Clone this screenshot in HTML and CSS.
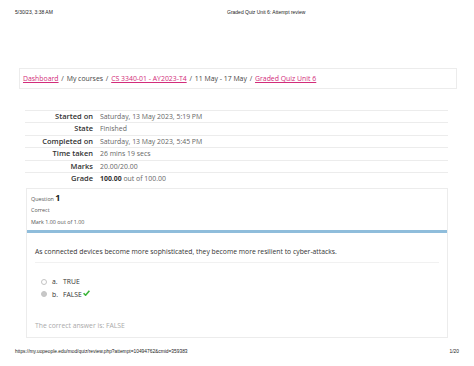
FILE: index.html
```html
<!DOCTYPE html>
<html lang="en">
  <head>
    <title>Graded Quiz Unit 6: Attempt review</title>
    <link rel="stylesheet" href="styles.css">
  </head>
  <body>
    <div class="print-head">
      <span class="date">5/30/23, 3:38 AM</span>
      <span class="doc-title">Graded Quiz Unit 6: Attempt review</span>
    </div>

    <nav class="crumbs">
      <a href="#">Dashboard</a> <span class="sep">/</span> My courses <span class="sep">/</span>
      <a href="#">CS 3340-01 - AY2023-T4</a> <span class="sep">/</span> 11 May - 17 May <span class="sep">/</span>
      <a href="#">Graded Quiz Unit 6</a>
    </nav>

    <table class="summary">
      <tr><th>Started on</th><td>Saturday, 13 May 2023, 5:19 PM</td></tr>
      <tr><th>State</th><td>Finished</td></tr>
      <tr><th>Completed on</th><td>Saturday, 13 May 2023, 5:45 PM</td></tr>
      <tr><th>Time taken</th><td>26 mins 19 secs</td></tr>
      <tr><th>Marks</th><td>20.00/20.00</td></tr>
      <tr><th>Grade</th><td><b>100.00</b> out of 100.00</td></tr>
    </table>

    <div class="que">
      <div class="que-info">
        <div class="qno">Question <b>1</b></div>
        <div class="state">Correct</div>
        <div class="grade">Mark 1.00 out of 1.00</div>
      </div>
      <div class="formulation">
        <p class="qtext">As connected devices become more sophisticated, they become more resilient to cyber-attacks.</p>
        <div class="answers">
          <div class="opt">
            <span class="radio"></span><span class="letter">a.</span><span>TRUE</span>
          </div>
          <div class="opt">
            <span class="radio on"></span><span class="letter">b.</span><span>FALSE</span>
            <svg class="tick" width="7" height="6" viewBox="0 0 7 6">
              <path d="M0.6 3.2 L2.6 5.2 L6.4 0.8" fill="none" stroke="#3bb53b" stroke-width="1.6"/>
            </svg>
          </div>
        </div>
      </div>
      <div class="feedback">The correct answer is: FALSE</div>
    </div>

    <div class="print-foot">
      <span>https://my.uopeople.edu/mod/quiz/review.php?attempt=10494762&amp;cmid=359383</span>
      <span>1/20</span>
    </div>
  </body>
</html>
```

FILE: styles.css
```css
body {
  margin: 0;
  width: 474px;
  height: 366px;
  background: #fff;
  font-family: "Open Sans", "Noto Sans", sans-serif;
  color: #333;
  overflow: hidden;
}

/* 인쇄 머리말 / 꼬리말 */
.print-head,
.print-foot {
  font-family: "Liberation Sans", Arial, sans-serif;
  font-size: 5px;
  color: #222;
}
.print-head {
  display: grid;
  grid-template-columns: 212px 1fr;
  padding: 9px 15px 0;
  height: 68px;
  box-sizing: border-box;
}
.print-foot {
  display: flex;
  justify-content: space-between;
  padding: 11px 15px 0 15px;
  font-size: 4.85px;
}

/* breadcrumb */
.crumbs {
  margin: 0 17px 0 19px;
  height: 21px;
  padding: 0 3px;
  border: 1px solid #ececec;
  box-sizing: border-box;
  font-size: 6.9px;
  line-height: 19px;
  color: #444;
  white-space: nowrap;
}
.crumbs a {
  color: #d22c7a;
}
.sep {
  margin: 0 1px;
}

/* 요약 표 */
.summary {
  margin: 21px 26px 0 25px;
  width: 423px;
  border-collapse: collapse;
  font-size: 6.9px;
}
.summary tr {
  border-top: 1px solid #ececec;
}
.summary th,
.summary td {
  padding: 0;
  height: 11.4px;
  line-height: 11.4px;
}
.summary th {
  width: 68px;
  text-align: right;
  padding-right: 7px;
  font-size: 7.5px;
  font-weight: 600;
  color: #333;
}
.summary td {
  color: #666;
}
.summary td b {
  color: #333;
  font-weight: 700;
}

/* 문제 카드 */
.que {
  margin: 4px 26px 0;
  border: 1px solid #ececec;
  height: 150px;
  box-sizing: border-box;
}
.que-info {
  padding: 4px 4px 2px;
  font-size: 5.4px;
  color: #555;
}
.qno {
  line-height: 10px;
}
.qno b {
  font-size: 9px;
  color: #222;
}
.state,
.grade {
  line-height: 12px;
}
.formulation {
  border-top: 3px solid #8fbddb;
  padding: 0 8px;
}
.qtext {
  margin: 0;
  padding: 14px 0 6px 0;
  font-size: 6.8px;
  color: #333;
  border-bottom: 1px solid #f1f1f1;
}
.answers {
  padding: 12px 0 0 6px;
  font-size: 6.8px;
  color: #333;
}
.opt {
  display: flex;
  align-items: center;
  height: 12.5px;
}
.radio {
  width: 4px;
  height: 4px;
  border: 0.8px solid #c4c4c4;
  border-radius: 50%;
  margin-right: 5px;
}
.radio.on {
  background: #c8c8c8;
}
.letter {
  width: 11px;
}
.tick {
  margin: -3px 0 0 1px;
}
.feedback {
  padding: 21px 8px 0;
  font-size: 6.8px;
  color: #aaa;
}
```
